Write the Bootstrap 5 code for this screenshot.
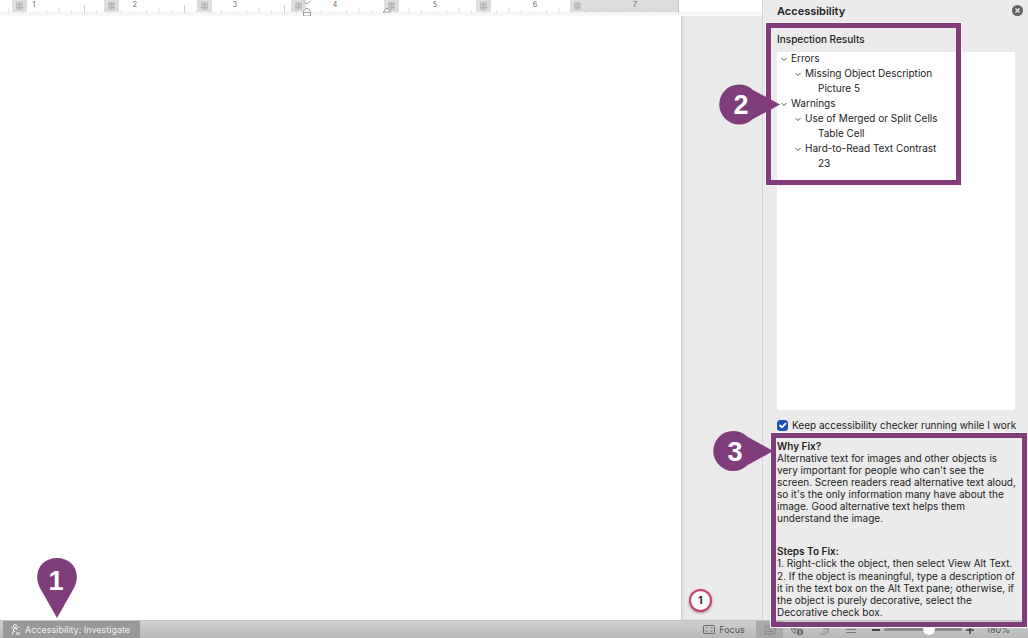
<!DOCTYPE html>
<html lang="en">
<head>
<meta charset="utf-8">
<meta name="viewport" content="width=device-width, initial-scale=1">
<title>Accessibility checker</title>
<link href="https://cdn.jsdelivr.net/npm/bootstrap@5.3.0/dist/css/bootstrap.min.css" rel="stylesheet">
<style>
  :root { --plum: #7f3e7b; --panel: #ebebeb; }
  body { font-family: Inter, "Liberation Sans", sans-serif; font-size: 10px; line-height: 15px; color: #222; background: #fff; }
  main { min-height: 0; }
  .ruler { height: 16px; background: linear-gradient(#fff 11px, #f4f4f4 13px, #fafafa); }
  .ruler text { font-size: 7px; fill: #666; text-anchor: middle; }
  .gutter { width: 81px; border-left: 1px solid #cfcfcf; background: var(--panel); box-shadow: inset 2px 0 2px #dedede; }
  .count-badge { width: 23px; height: 23px; border: 2px solid #cf3f68; background: #fff; font-weight: 700; font-size: 10px; box-shadow: 0 1px 3px #999; margin: 0 0 8px 7px; color: #222; }
  .pane { width: 266px; background: var(--panel); border-left: 1px solid #d4d4d4; padding: 3px 13px 0 14px; }
  .pane h1 { font-size: 11px; line-height: 16px; font-weight: 600; }
  .pane h2 { font-size: 10px; line-height: 16px; font-weight: 500; margin: 12px 0 5px; }
  .close-btn { width: 11px; height: 11px; margin: 2px -8px 0 0; line-height: 0; }
  .results { height: 358px; background: #fff; padding: 0 3px; }
  .results .tree { margin: -1px 0 0; }
  .results ul ul { padding-left: 14px; }
  .results .leaf { padding-left: 24px; }
  .twisty { width: 8px; height: 8px; flex: none; margin-right: 3px; }
  .keep { height: 30px; }
  .keep .form-check-input { width: 11px; height: 11px; border-radius: 3px; margin: 0 4px 0 0; flex: none; }
  .keep .form-check-input:checked { background-color: #1c52b2; border-color: #1c52b2; background-size: 12px; }
  .advice { line-height: 12px; margin-right: -6px; }
  .advice h3 { font-size: 10px; line-height: 12px; font-weight: 600; margin: 0; }
  .advice p { margin: 0 0 21px; }
  .advice .step { margin-bottom: 1px; }
  .frame { border: 5px solid var(--plum); outline: 1px solid #f8f4f8; pointer-events: none; }
  .frame-results { left: 3px; top: 23px; width: 195px; height: 162px; }
  .frame-advice { left: 8px; top: 433px; width: 256px; height: 194px; z-index: 3; }
  .pin { pointer-events: none; z-index: 4; }
  .pin text { font-family: "Liberation Sans", Arial, sans-serif; font-size: 27px; font-weight: 700; fill: #fff; text-anchor: middle; }
  .pin-2 { left: -44px; top: 84px; }
  .pin-3 { left: -50px; top: 431px; }
  .pin-1 { left: 36px; bottom: 19px; }
  .status { height: 18px; background: linear-gradient(#d0d0d0, #b8b8b8); border-top: 1px solid #c4c4c4; font-size: 9px; line-height: 16px; color: #555; }
  .status button { font-size: 9px; line-height: 16px; color: #555; }
  .status .checker { width: 137px; margin-left: 3px; background: #999; color: #eee; padding-left: 7px; }
  .focus-btn { width: 48px; }
  .view-btn { width: 27px; }
  .view-btn.current { background: #a9a9a9; margin-left: 5px; }
  .zoom-range { width: 78px; height: 10px; appearance: none; background: transparent; margin: 0 4px; }
  .zoom-range::-webkit-slider-runnable-track { height: 3px; background: #888; border-radius: 2px; }
  .zoom-range::-webkit-slider-thumb { appearance: none; width: 12px; height: 12px; border-radius: 50%; background: #fff; margin-top: -5px; }
  .zoom-value { padding: 0 18px 0 12px; }
</style>
</head>
<body>
<div class="d-flex flex-column vh-100 overflow-hidden position-relative">
  <main class="d-flex flex-grow-1">
    <section class="d-flex flex-column flex-grow-1" aria-label="Document">
      <div class="ruler">
        <svg class="d-block" width="100%" height="16" aria-label="Ruler">
          <defs>
            <pattern id="ticks" x="34" width="100" height="16" patternUnits="userSpaceOnUse">
              <path d="M12.500 10v3M25 8v5M37.500 10v3M62.500 10v3M75 8v5M87.500 10v3M0 10v3" stroke="#ddd"/>
              <path d="M50.500 5v8" stroke="#d2d2d2"/>
            </pattern>
            <g id="colmark"><path d="M0 0h15v12H0z" fill="#dedede"/><path d="M4 2h7v8H4z" fill="#c8c8c8"/><path d="M4 4.500h7M4 7.500h7M7.500 2v8" stroke="#aaa" stroke-width=".6"/></g>
          </defs>
          <path d="M583 0h96v12h-96z" fill="#dcdcdc"/>
          <rect width="678" height="16" fill="url(#ticks)"/>
          <path d="M678.500 0v13" stroke="#c4c4c4"/>
          <use href="#colmark" x="12"/><use href="#colmark" x="104"/><use href="#colmark" x="197"/><use href="#colmark" x="291"/><use href="#colmark" x="384"/><use href="#colmark" x="476"/><use href="#colmark" x="570"/>
          <path d="M303.500 1l3.500 3 3.500-3M303.500 11l3.500-3 3.500 3v5h-7zM303.500 12.500h7M383 12l4-4 4 4z" fill="#fff" stroke="#999"/>
          <text x="34" y="7">1</text><text x="135" y="7">2</text><text x="235" y="7">3</text><text x="335" y="7">4</text><text x="435" y="7">5</text><text x="535" y="7">6</text><text x="635" y="7">7</text>
        </svg>
      </div>
      <div class="d-flex flex-grow-1">
        <article class="flex-grow-1 bg-white"></article>
        <div class="gutter d-flex align-items-end">
          <button type="button" class="count-badge rounded-circle p-0 d-flex align-items-center justify-content-center">1</button>
        </div>
      </div>
    </section>

    <aside class="pane position-relative flex-shrink-0">
      <div class="d-flex justify-content-between align-items-start">
        <h1 class="m-0">Accessibility</h1>
        <button type="button" class="close-btn border-0 p-0 bg-transparent" aria-label="Close">
          <svg width="11" height="11" viewBox="0 0 11 11"><circle cx="5.500" cy="5.500" r="5.500" fill="#626262"/><path d="M3.500 3.500l4 4m0-4l-4 4" stroke="#eee" stroke-width="1.300"/></svg>
        </button>
      </div>
      <h2>Inspection Results</h2>
      <div class="results d-flex flex-column">
        <svg class="d-none"><symbol id="chev" viewBox="0 0 8 8"><path d="M1.500 3L4 5.500 6.500 3" fill="none" stroke="#555"/></symbol></svg>
        <ul class="tree list-unstyled">
          <li><div class="d-flex align-items-center"><svg class="twisty"><use href="#chev"/></svg>Errors</div>
            <ul class="list-unstyled">
              <li><div class="d-flex align-items-center"><svg class="twisty"><use href="#chev"/></svg>Missing Object Description</div><div class="leaf">Picture 5</div></li>
            </ul>
          </li>
          <li><div class="d-flex align-items-center"><svg class="twisty"><use href="#chev"/></svg>Warnings</div>
            <ul class="list-unstyled">
              <li><div class="d-flex align-items-center"><svg class="twisty"><use href="#chev"/></svg>Use of Merged or Split Cells</div><div class="leaf">Table Cell</div></li>
              <li><div class="d-flex align-items-center"><svg class="twisty"><use href="#chev"/></svg>Hard-to-Read Text Contrast</div><div class="leaf">23</div></li>
            </ul>
          </li>
        </ul>
      </div>
      <div class="keep d-flex align-items-center">
        <input class="form-check-input" type="checkbox" id="keep" checked>
        <label for="keep" class="text-nowrap">Keep accessibility checker running while I work</label>
      </div>
      <div class="advice">
        <h3>Why Fix?</h3>
        <p>Alternative text for images and other objects is<br>very important for people who can't see the<br>screen. Screen readers read alternative text aloud,<br>so it's the only information many have about the<br>image. Good alternative text helps them<br>understand the image.</p>
        <h3>Steps To Fix:</h3>
        <div class="step">1. Right-click the object, then select View Alt Text.</div>
        <div class="step">2. If the object is meaningful, type a description of<br>it in the text box on the Alt Text pane; otherwise, if<br>the object is purely decorative, select the<br>Decorative check box.</div>
      </div>
      <div class="frame frame-results position-absolute"></div>
      <div class="frame frame-advice position-absolute"></div>
      <svg class="pin pin-2 position-absolute" width="62" height="42" viewBox="0 0 62 42"><path d="M61 20.500L34 35A20 20 0 1 1 34 6z" fill="#7f3e7b"/><text x="22" y="30">2</text></svg>
      <svg class="pin pin-3 position-absolute" width="62" height="42" viewBox="0 0 62 42"><path d="M60 20L34 34.500A20 20 0 1 1 34 5.500z" fill="#7f3e7b"/><text x="22" y="30">3</text></svg>
    </aside>
  </main>

  <footer class="status d-flex align-items-stretch flex-shrink-0">
    <button type="button" class="checker border-0 py-0 pe-0 d-flex align-items-center gap-1 text-nowrap">
      <svg width="11" height="12" viewBox="0 0 11 12" fill="none" stroke="#eee"><circle cx="5" cy="2" r="1.500"/><path d="M1 3l2.500 1.500h3L9 3M3.500 4.500V7L2 11M6.500 4.500V6M3.500 8L5 7M6 8l4 3M10 8l-4 3"/></svg>Accessibility: Investigate
    </button>
    <div class="ms-auto d-flex align-items-center">
      <button type="button" class="focus-btn d-flex align-items-center gap-1 border-0 p-0 bg-transparent">
        <svg width="12" height="9" viewBox="0 0 12 9" fill="none" stroke="#666"><rect x=".5" y=".5" width="11" height="8" rx="1"/><path d="M3 3V2.500h1.500M7.500 2.500H9V4M3 5v1.500h1.500M7.500 6.500H9V5" stroke="#888"/></svg>Focus
      </button>
      <button type="button" class="view-btn current border-0 p-0 h-100" aria-label="Print layout"><svg width="12" height="10" viewBox="0 0 12 10" fill="none" stroke="#888"><path d="M1 1h10v8H1zM3 4h6M3 6.500h6"/></svg></button>
      <button type="button" class="view-btn border-0 p-0 bg-transparent" aria-label="Web layout"><svg width="14" height="12" viewBox="0 0 14 12" fill="none" stroke="#777"><path d="M6 9A4 4 0 1 1 9 3M1 5h7M5 1v8"/><circle cx="10" cy="8" r="3" fill="#666"/><path d="M10 6v4" stroke="#ddd"/></svg></button>
      <button type="button" class="view-btn border-0 p-0 bg-transparent" aria-label="Outline"><svg width="12" height="10" viewBox="0 0 12 10" fill="none" stroke="#888"><path d="M3 1h8M5 4h6M5 7h4M2 9h6M10 1v8"/></svg></button>
      <button type="button" class="view-btn border-0 p-0 bg-transparent" aria-label="Draft"><svg width="10" height="10" viewBox="0 0 10 10" stroke="#777"><path d="M0 1.500h10M0 4.500h10M0 7.500h10"/></svg></button>
      <button type="button" class="border-0 p-0 ms-2 bg-transparent" aria-label="Zoom out"><svg width="8" height="8"><path d="M0 4h8" stroke="#444" stroke-width="2"/></svg></button>
      <input class="zoom-range" type="range" min="0" max="100" value="59" aria-label="Zoom">
      <button type="button" class="border-0 p-0 bg-transparent" aria-label="Zoom in"><svg width="8" height="8"><path d="M0 4h8M4 0v8" stroke="#444" stroke-width="1.500"/></svg></button>
      <span class="zoom-value">180%</span>
    </div>
  </footer>
  <svg class="pin pin-1 position-absolute" width="42" height="62" viewBox="0 0 42 62"><path d="M21 61L4 31C-4 15 6 1 21 1s25 14 17 30z" fill="#7f3e7b"/><text x="20" y="33">1</text></svg>
</div>
<script src="https://cdn.jsdelivr.net/npm/bootstrap@5.3.0/dist/js/bootstrap.bundle.min.js"></script>
</body>
</html>
